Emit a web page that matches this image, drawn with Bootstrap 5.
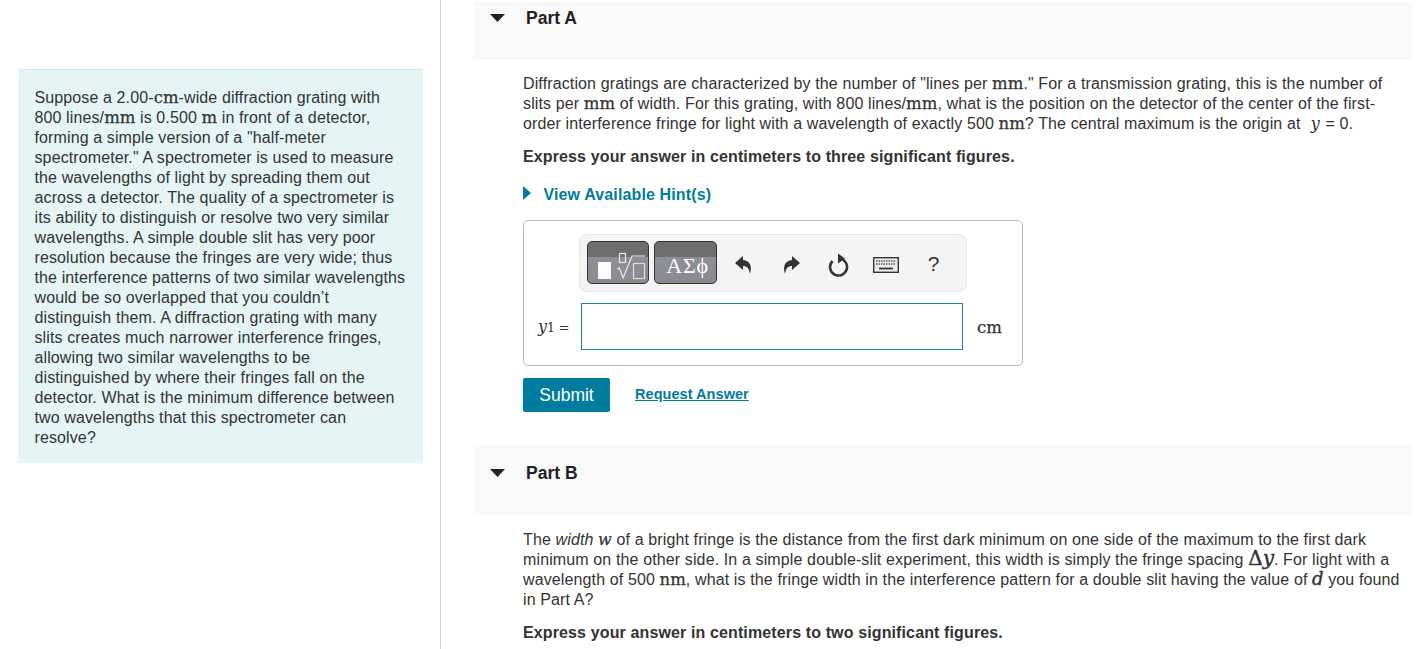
<!DOCTYPE html>
<html lang="en">
<head>
<meta charset="utf-8">
<title>Part A</title>
<link href="https://cdn.jsdelivr.net/npm/bootstrap@5.3.0/dist/css/bootstrap.min.css" rel="stylesheet">
<style>
html,body{height:649px;overflow:hidden;background:#fff}
body{font-family:"Liberation Sans",Arial,sans-serif;font-size:16px;line-height:20px;color:#333;letter-spacing:.115px}
.shell{height:649px}
.leftpane{width:441px;flex:none;border-right:1px solid #c5d3e0;padding:69px 17px 0 18px}
.introbox{background:#e5f5f6;border-top:1px solid #d8e8ea;padding:18px 0 16px 16.500px;height:394px;white-space:nowrap}
.rightpane{width:939px;margin-left:32px;flex:none;padding-top:2px}
.parthead{background:#f9f9f9;height:58px;padding:6px 0 0 17px;display:flex;gap:21px;color:#222;font-weight:700;font-size:17.500px;letter-spacing:0}
.parthead.second{height:70px;margin-top:33px;padding-top:18px}
.caret-d{width:15px;height:8px;margin-top:6px;flex:none}
.partbody{padding:14px 0 0 50px;letter-spacing:.125px}
.partbody p{margin:0;white-space:nowrap}
.m{font-family:"DejaVu Serif",serif;font-size:16.500px;line-height:0;letter-spacing:0;-webkit-text-stroke:.25px #333}
.mi{font-family:"DejaVu Serif",serif;font-style:italic;font-size:16px;line-height:0;-webkit-text-stroke:.25px #333}
.m-big{font-family:"DejaVu Serif",serif;font-size:20px;line-height:0;letter-spacing:0;-webkit-text-stroke:.45px #333}
.m-d{font-size:18px}
.eqi{font-family:"DejaVu Serif",serif;font-style:italic;font-size:16px;line-height:0;margin-left:1px;margin-right:1px}
.boldline{font-weight:700;margin-top:13px!important;letter-spacing:.125px}
.hintlink{color:#007b9e;font-weight:700;display:flex;align-items:center;gap:12.500px;margin-top:18px;height:20px;letter-spacing:.13px}
.hintlink svg{margin-top:-4px}
.answerbox{width:500px;height:146px;border:1px solid #bbb;border-radius:5px;margin-top:15px;padding:13px 0 0 0}
.toolbarwrap{width:388px;height:58px;margin-left:55px;background:#f4f4f4;border:1px solid #e6e6e6;border-radius:8px;padding:6px 7px;display:flex}
.tbtn{flex:none;height:43px;border:1px solid #333;border-radius:5px;background:linear-gradient(#6e6e6e 0,#6e6e6e 36%,#8f8f98 36%,#8a8a92 100%);display:flex;align-items:center;justify-content:center;color:#fff}
.tbtn.one{width:62px}
.tbtn.two{width:63px;margin-left:5px;font-family:"Liberation Serif",serif;font-size:22px;padding:6px 0 0 4px;letter-spacing:.7px}
.tools{display:flex;align-items:center;margin-left:3px;height:43px;padding-top:4px}
.toolcell{width:47.500px;display:flex;justify-content:center;flex:none}
.qmark{font-size:21px;color:#333;margin-top:-2px}
.inputrow{display:flex;align-items:center;margin-top:11px;height:47px}
.eqlabel{width:57px;padding:2px 0 0 14px;color:#333;white-space:nowrap;font-family:"DejaVu Serif",serif;font-size:12.500px;letter-spacing:0}
.eqlabel i{font-size:16px}
.ansfield{width:382px;height:47px;border:1px solid #1d86a4;border-radius:0;background:#fff;flex:none}
.unitlabel{margin-left:14px;padding-top:2px;font-family:"DejaVu Serif",serif;font-size:16.500px;letter-spacing:0;-webkit-text-stroke:.25px #333}
.actionrow{display:flex;align-items:center;gap:25px;margin-top:12px}
.submitbtn{background:#007c9e;border:0;color:#fff;width:87px;height:34px;border-radius:2px;font-size:17.500px;padding:0}
.reqlink{color:#007b9e;font-weight:700;font-size:14.500px;margin-top:-2px;letter-spacing:.05px}
.partbody.secondbody{padding-top:15px}
</style>
</head>
<body>
<div class="d-flex shell">
  <aside class="leftpane">
    <div class="introbox">Suppose a 2.00-<span class="m">cm</span>-wide diffraction grating with<br>800 lines/<span class="m">mm</span> is 0.500 <span class="m">m</span> in front of a detector,<br>forming a simple version of a "half-meter<br>spectrometer." A spectrometer is used to measure<br>the wavelengths of light by spreading them out<br>across a detector. The quality of a spectrometer is<br>its ability to distinguish or resolve two very similar<br>wavelengths. A simple double slit has very poor<br>resolution because the fringes are very wide; thus<br>the interference patterns of two similar wavelengths<br>would be so overlapped that you couldn’t<br>distinguish them. A diffraction grating with many<br>slits creates much narrower interference fringes,<br>allowing two similar wavelengths to be<br>distinguished by where their fringes fall on the<br>detector. What is the minimum difference between<br>two wavelengths that this spectrometer can<br>resolve?</div>
  </aside>
  <main class="rightpane">
    <div class="parthead"><svg class="caret-d" viewBox="0 0 15 8"><path d="M0 0H15L7.500 8Z" fill="#222"/></svg><span>Part A</span></div>
    <div class="partbody">
      <p>Diffraction gratings are characterized by the number of "lines per <span class="m">mm</span>." For a transmission grating, this is the number of<br>slits per <span class="m">mm</span> of width. For this grating, with 800 lines/<span class="m">mm</span>, what is the position on the detector of the center of the first-<br>order interference fringe for light with a wavelength of exactly 500 <span class="m">nm</span>? The central maximum is the origin at &nbsp;<span class="eqi">y</span> = 0.</p>
      <p class="boldline">Express your answer in centimeters to three significant figures.</p>
      <a class="hintlink text-decoration-none" href="#"><svg width="8" height="14" viewBox="0 0 8 14"><path d="M0 0L8 7L0 14Z" fill="#007b9e"/></svg><span>View Available Hint(s)</span></a>
      <div class="answerbox">
        <div class="toolbarwrap">
          <div class="tbtn one"><svg width="60" height="41" viewBox="0 0 60 41"><rect x="10" y="20" width="13" height="17" fill="#fff"/><rect x="31.500" y="11.500" width="6" height="9" fill="none" stroke="#e8e8e8" stroke-width="1.200"/><path d="M29 27l2.500-1 3.500 10 9-22h13" fill="none" stroke="#e8e8e8" stroke-width="1.200"/><rect x="45.500" y="21.500" width="11" height="15" fill="none" stroke="#ddd" stroke-width="1.200"/></svg></div>
          <div class="tbtn two">ΑΣϕ</div>
          <div class="tools">
            <div class="toolcell"><svg width="18" height="20" viewBox="0 0 18 20"><path d="M8 1L0 8l8 7v-4c4 0 6 2 7 8 2-7 1-13-7-14z" fill="#333"/></svg></div>
            <div class="toolcell"><svg width="18" height="20" viewBox="0 0 18 20"><path d="M10 1l8 7-8 7v-4c-4 0-6 2-7 8-2-7-1-13 7-14z" fill="#333"/></svg></div>
            <div class="toolcell"><svg width="22" height="24" viewBox="0 0 22 24"><path d="M4.500 8A8.500 8.500 0 1 0 11 5.500" fill="none" stroke="#333" stroke-width="2.600"/><path d="M10 .5l7 5-7 5z" fill="#333"/></svg></div>
            <div class="toolcell"><svg width="26" height="16" viewBox="0 0 26 16"><rect x=".7" y=".7" width="24.600" height="14.600" fill="#eee" stroke="#333" stroke-width="1.400"/><path d="M3 4h20M3 7h20" stroke="#555" stroke-width="1.600" stroke-dasharray="1.500 1"/><path d="M6 11.500h14" stroke="#333" stroke-width="1.800"/></svg></div>
            <div class="toolcell qmark">?</div>
          </div>
        </div>
        <div class="inputrow">
          <div class="eqlabel"><i>y</i>1 =</div>
          <input class="ansfield" type="text" aria-label="y1">
          <div class="unitlabel">cm</div>
        </div>
      </div>
      <div class="actionrow">
        <button class="submitbtn" type="button">Submit</button>
        <a class="reqlink" href="#">Request Answer</a>
      </div>
    </div>
    <div class="parthead second"><svg class="caret-d" viewBox="0 0 15 8"><path d="M0 0H15L7.500 8Z" fill="#222"/></svg><span>Part B</span></div>
    <div class="partbody secondbody">
      <p>The <i>width</i> <span class="mi">w</span> of a bright fringe is the distance from the first dark minimum on one side of the maximum to the first dark<br>minimum on the other side. In a simple double-slit experiment, this width is simply the fringe spacing <span class="m-big">Δ<i>y</i></span>. For light with a<br>wavelength of 500 <span class="m">nm</span>, what is the fringe width in the interference pattern for a double slit having the value of <span class="m-big m-d"><i>d</i></span> you found<br>in Part A?</p>
      <p class="boldline">Express your answer in centimeters to two significant figures.</p>
    </div>
  </main>
</div>
<script src="https://cdn.jsdelivr.net/npm/bootstrap@5.3.0/dist/js/bootstrap.bundle.min.js"></script>
</body>
</html>
